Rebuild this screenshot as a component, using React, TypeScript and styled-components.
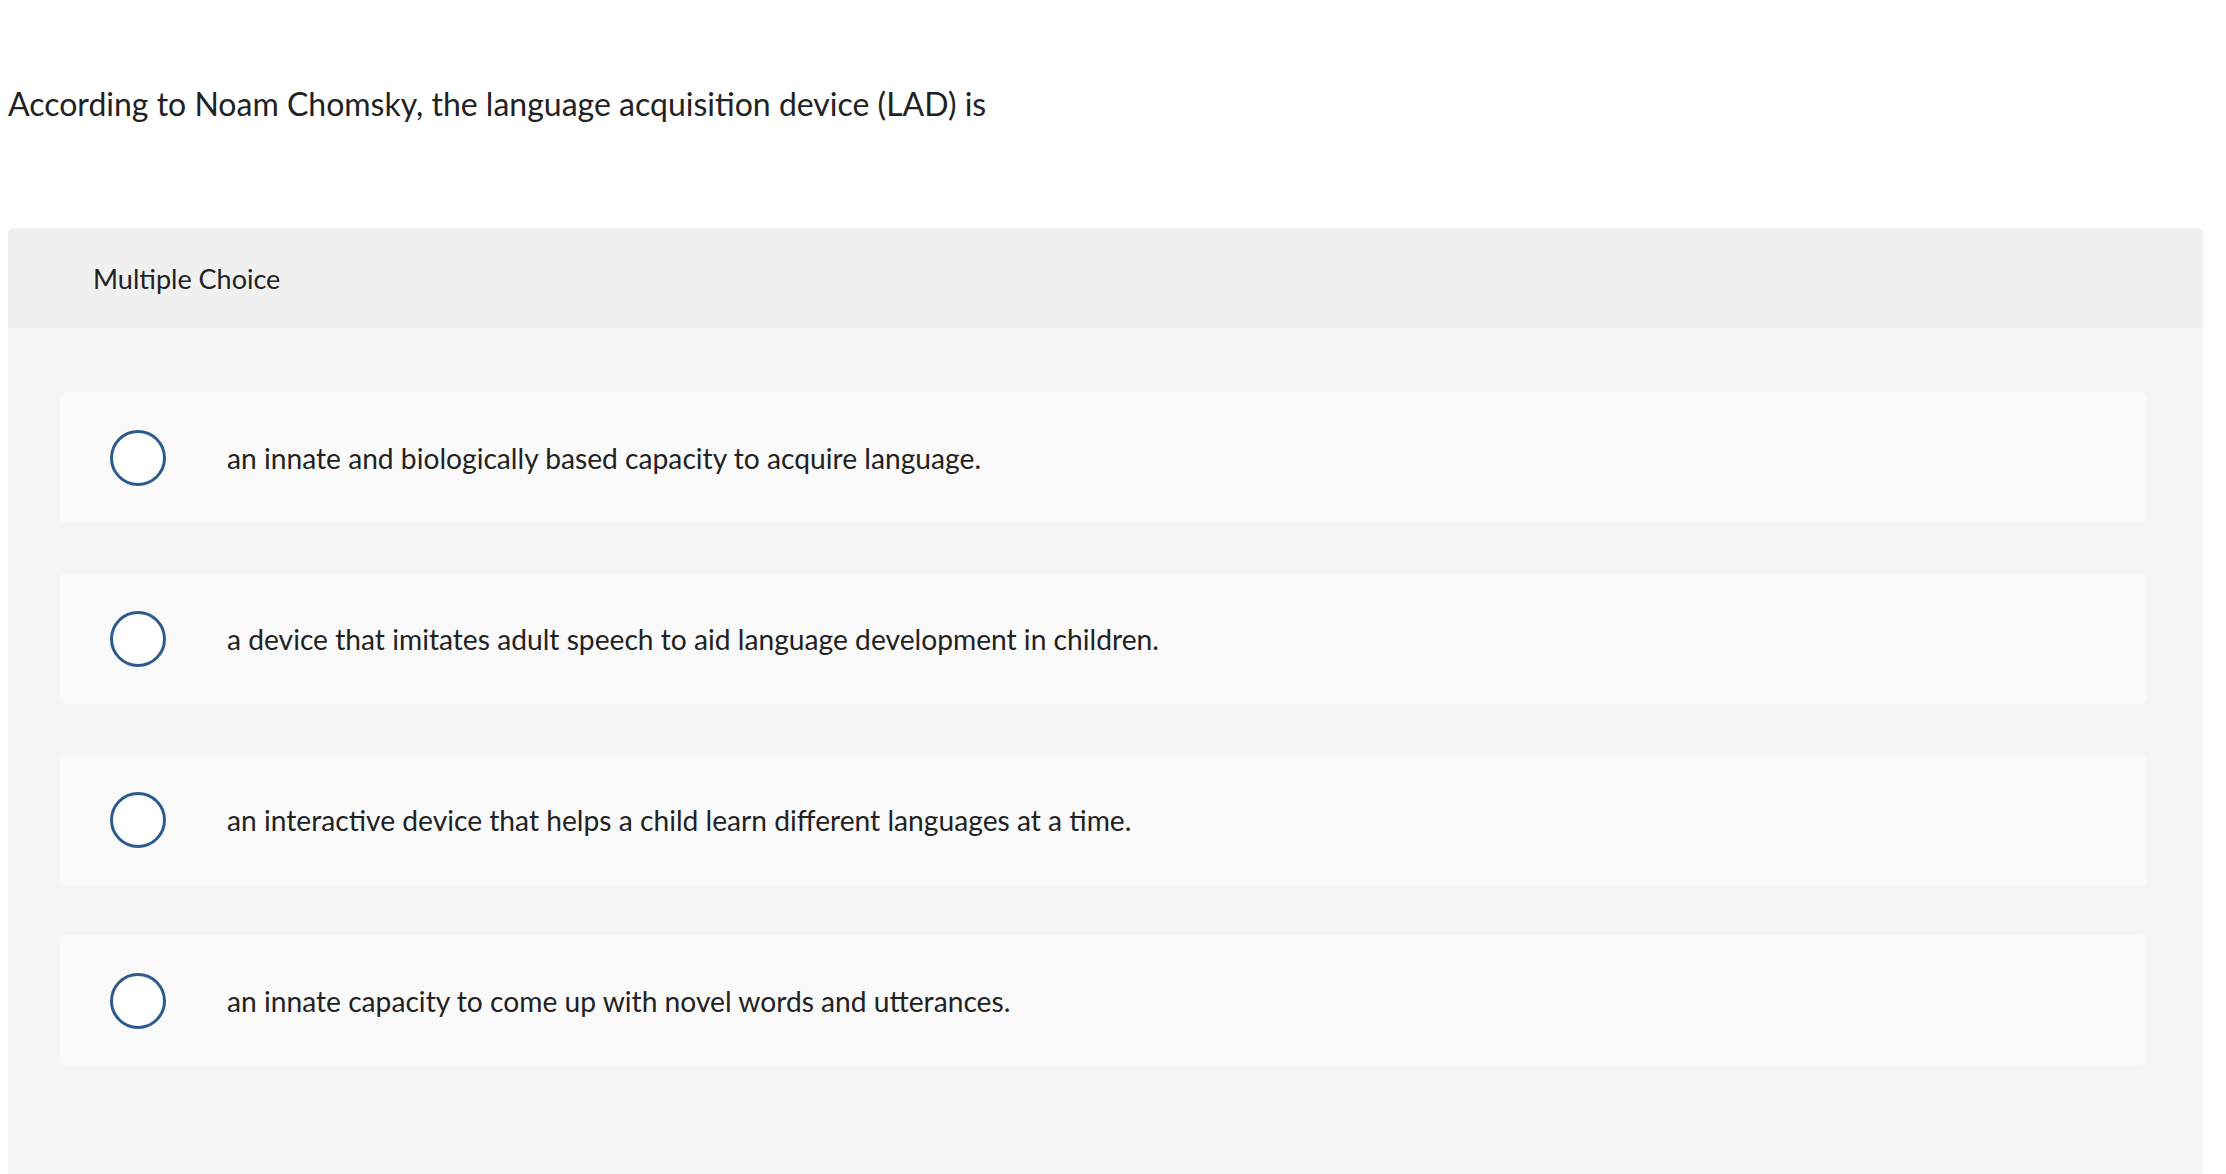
import React, { useState } from 'react';
import styled, { createGlobalStyle } from 'styled-components';

const GlobalStyle = createGlobalStyle`
  html, body {
    margin: 0;
    padding: 0;
    background: #ffffff;
  }
  body {
    font-family: Lato, 'Open Sans', sans-serif;
    color: #222222;
  }
`;

const Page = styled.div`
  padding: 0 23px 0 8px;
`;

const Prompt = styled.p`
  margin: 0;
  padding-top: 84px;
  height: 228px;
  box-sizing: border-box;
  font-size: 32px;
  line-height: 40px;
  color: #222222;
`;

const Panel = styled.section`
  background: #f5f5f5;
  border-radius: 5px 5px 0 0;
  min-height: 1000px;
`;

const PanelHeader = styled.div`
  height: 100px;
  display: flex;
  align-items: center;
  padding-left: 85px;
  background: #f0f0f0;
  border-radius: 5px 5px 0 0;
  font-size: 27px;
  color: #222222;
`;

const Choices = styled.div`
  display: flex;
  flex-direction: column;
  gap: 50px;
  padding: 64px 56px 64px 52px;
`;

const Choice = styled.label`
  display: flex;
  align-items: center;
  gap: 61px;
  height: 131px;
  padding-left: 50px;
  background: #fafafa;
  border-radius: 6px;
  cursor: pointer;
`;

const Radio = styled.span<{ $checked: boolean }>`
  flex: none;
  width: 56px;
  height: 56px;
  box-sizing: border-box;
  border-radius: 50%;
  border: 3px solid #2d5b8e;
  background: #ffffff;
  box-shadow: ${(p) => (p.$checked ? 'inset 0 0 0 10px #ffffff, inset 0 0 0 30px #2d5b8e' : 'none')};
`;

const ChoiceText = styled.span`
  font-size: 28.2px;
  color: #222222;
`;

const options = [
  'an innate and biologically based capacity to acquire language.',
  'a device that imitates adult speech to aid language development in children.',
  'an interactive device that helps a child learn different languages at a time.',
  'an innate capacity to come up with novel words and utterances.',
];

export default function App() {
  const [selected, setSelected] = useState<number | null>(null);

  return (
    <>
      <GlobalStyle />
      <Page>
        <Prompt>According to Noam Chomsky, the language acquisition device (LAD) is</Prompt>
        <Panel>
          <PanelHeader>Multiple Choice</PanelHeader>
          <Choices>
            {options.map((text, i) => (
              <Choice key={i} onClick={() => setSelected(i)}>
                <Radio $checked={selected === i} />
                <ChoiceText>{text}</ChoiceText>
              </Choice>
            ))}
          </Choices>
        </Panel>
      </Page>
    </>
  );
}
